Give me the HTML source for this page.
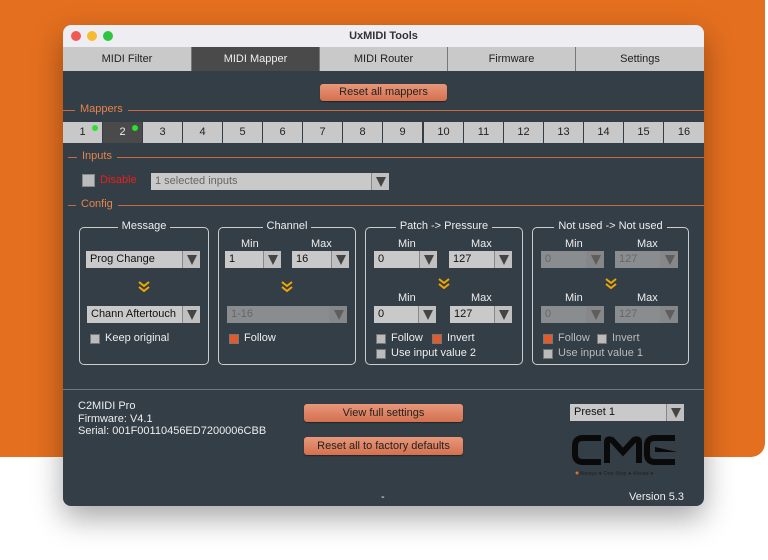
<!DOCTYPE html>
<html><head><meta charset="utf-8"><style>
*{margin:0;padding:0;box-sizing:border-box}
body{width:768px;height:560px;background:#fff;position:relative;overflow:hidden;font-family:"Liberation Sans",sans-serif;font-size:11px;color:#111}
.a{position:absolute}
#org{left:-20px;top:-20px;width:785px;height:477px;background:#e46f1f;border-radius:14px}
#win{left:63px;top:25px;width:641px;height:481px;background:#343e46;border-radius:8px;overflow:hidden;box-shadow:0 12px 30px rgba(0,0,0,.35)}
#tb{left:0;top:0;width:641px;height:22px;background:#eeeef2;text-align:center;font-weight:bold;font-size:11px;line-height:22px;color:#333}
.dot{top:6px;width:10px;height:10px;border-radius:50%}
.tab{top:22px;height:24px;background:#c9c9c9;border-right:1px solid #777;text-align:center;line-height:24px;font-size:11px;color:#222}
.btn{background:linear-gradient(#e8977a,#d4704f);border-radius:3px;text-align:center;color:#222;font-size:11px;box-shadow:0 1px 1px rgba(0,0,0,.4)}
.sec{color:#e8834d;font-size:11px;background:#343e46;padding:0 5px}
.line{height:1px;background:#c86a3c}
.mb{top:97px;height:21px;width:39px;background:#c8c8c8;text-align:center;line-height:21px;font-size:11px;color:#222}
.sel{background:#c9c9c9;height:17px;font-size:11px;line-height:17px;padding-left:4px;color:#111}
.sel:after{content:"";position:absolute;right:0;top:0;width:17px;height:17px;border-left:1px solid #888;background:#c0c0c0}
.sel i{position:absolute;right:3px;top:4px;width:0;height:0;border-left:5px solid transparent;border-right:5px solid transparent;border-top:10px solid #444;z-index:2}
.dis{background:#8a8d90;color:#666}
.dis:after{background:#858789}
.dis i{border-top-color:#5e5e5e}
.box{border:1.5px solid #ccc;border-radius:5px}
.bt{top:-8px;left:0;right:0;text-align:center;color:#eee;font-size:11px}
.bt span{background:#343e46;padding:0 4px}
.lb{color:#eee;font-size:11px}
.cb{width:10px;height:10px;background:#bbb;border:1px solid #777}
.cbo{background:#e35a2d}
.chev{left:50%;margin-left:-6px;top:53px}
</style></head><body>
<div id="org" class="a"></div>
<div id="win" class="a">
<div id="tb" class="a">UxMIDI Tools</div>
<div class="a dot" style="left:8px;background:#f05a55"></div>
<div class="a dot" style="left:24px;background:#f6bc2f"></div>
<div class="a dot" style="left:40px;background:#2ec641"></div>
<div class="a tab" style="left:0;width:129px">MIDI Filter</div>
<div class="a tab" style="left:129px;width:128px;background:#4a4a4a;color:#eee">MIDI Mapper</div>
<div class="a tab" style="left:257px;width:128px">MIDI Router</div>
<div class="a tab" style="left:385px;width:128px">Firmware</div>
<div class="a tab" style="left:513px;width:128px;border-right:0">Settings</div>
<div class="a btn" style="left:257px;top:59px;width:127px;height:17px;line-height:17px">Reset all mappers</div>
<div class="a line" style="left:0;top:85px;width:641px"></div><div class="a sec" style="left:12px;top:78px">Mappers</div>
<div class="a mb" style="left:0">1</div><div class="a" style="left:29px;top:100px;width:6px;height:6px;border-radius:50%;background:#2de02d"></div>
<div class="a mb" style="left:40px;background:#4a4a4a;color:#eee">2</div><div class="a" style="left:69px;top:100px;width:6px;height:6px;border-radius:50%;background:#2de02d"></div>
<div class="a mb" style="left:80px">3</div><div class="a mb" style="left:120px">4</div><div class="a mb" style="left:160px">5</div><div class="a mb" style="left:200px">6</div><div class="a mb" style="left:240px">7</div><div class="a mb" style="left:280px">8</div><div class="a mb" style="left:320px">9</div><div class="a mb" style="left:361px">10</div><div class="a mb" style="left:401px">11</div><div class="a mb" style="left:441px">12</div><div class="a mb" style="left:481px">13</div><div class="a mb" style="left:521px">14</div><div class="a mb" style="left:561px">15</div><div class="a mb" style="left:601px;width:40px">16</div>
<div class="a line" style="left:5px;top:132px;width:636px"></div><div class="a sec" style="left:14px;top:125px">Inputs</div>
<div class="a" style="left:19px;top:149px;width:13px;height:13px;background:#bbb;border:1px solid #888"></div>
<div class="a" style="left:37px;top:149px;color:#ee1d1d;font-size:11px">Disable</div>
<div class="a sel" style="left:88px;top:148px;width:238px;color:#666">1 selected inputs<i></i></div>
<div class="a line" style="left:5px;top:180px;width:636px"></div><div class="a sec" style="left:13px;top:173px">Config</div>

<div class="a box" style="left:16px;top:202px;width:130px;height:138px">
<div class="a bt"><span>Message</span></div>
<div class="a sel" style="left:6px;top:23px;width:114px">Prog Change<i></i></div>
<svg class="a chev" width="12" height="12" viewBox="0 0 12 12"><path d="M1 1L6 5L11 1M1 6L6 10L11 6" fill="none" stroke="#f0a800" stroke-width="2"/></svg>
<div class="a sel" style="left:7px;top:78px;width:113px">Chann Aftertouch<i></i></div>
<div class="a cb" style="left:10px;top:106px"></div><div class="a lb" style="left:25px;top:104px">Keep original</div>
</div>
<div class="a box" style="left:155px;top:202px;width:138px;height:138px">
<div class="a bt"><span>Channel</span></div>
<div class="a lb" style="left:22px;top:10px">Min</div><div class="a lb" style="left:92px;top:10px">Max</div>
<div class="a sel" style="left:6px;top:23px;width:56px">1<i></i></div>
<div class="a sel" style="left:73px;top:23px;width:57px">16<i></i></div>
<svg class="a chev" width="12" height="12" viewBox="0 0 12 12"><path d="M1 1L6 5L11 1M1 6L6 10L11 6" fill="none" stroke="#f0a800" stroke-width="2"/></svg>
<div class="a sel dis" style="left:8px;top:78px;width:120px">1-16<i></i></div>
<div class="a cb cbo" style="left:10px;top:106px"></div><div class="a lb" style="left:25px;top:104px">Follow</div>
</div>
<div class="a box" style="left:302px;top:202px;width:158px;height:138px">
<div class="a bt"><span>Patch -&gt; Pressure</span></div>
<div class="a lb" style="left:32px;top:10px">Min</div><div class="a lb" style="left:105px;top:10px">Max</div>
<div class="a sel" style="left:8px;top:23px;width:63px">0<i></i></div>
<div class="a sel" style="left:83px;top:23px;width:63px">127<i></i></div>
<svg class="a chev" style="top:50px" width="12" height="12" viewBox="0 0 12 12"><path d="M1 1L6 5L11 1M1 6L6 10L11 6" fill="none" stroke="#f0a800" stroke-width="2"/></svg>
<div class="a lb" style="left:32px;top:64px">Min</div><div class="a lb" style="left:105px;top:64px">Max</div>
<div class="a sel" style="left:8px;top:78px;width:62px">0<i></i></div>
<div class="a sel" style="left:84px;top:78px;width:62px">127<i></i></div>
<div class="a cb" style="left:10px;top:106px"></div><div class="a lb" style="left:25px;top:104px">Follow</div>
<div class="a cb cbo" style="left:66px;top:106px"></div><div class="a lb" style="left:81px;top:104px">Invert</div>
<div class="a cb" style="left:10px;top:121px"></div><div class="a lb" style="left:25px;top:119px">Use input value 2</div>
</div>
<div class="a box" style="left:469px;top:202px;width:157px;height:138px">
<div class="a bt"><span>Not used -&gt; Not used</span></div>
<div class="a lb" style="left:32px;top:10px">Min</div><div class="a lb" style="left:104px;top:10px">Max</div>
<div class="a sel dis" style="left:8px;top:23px;width:63px">0<i></i></div>
<div class="a sel dis" style="left:82px;top:23px;width:63px">127<i></i></div>
<svg class="a chev" style="top:50px" width="12" height="12" viewBox="0 0 12 12"><path d="M1 1L6 5L11 1M1 6L6 10L11 6" fill="none" stroke="#f0a800" stroke-width="2"/></svg>
<div class="a lb" style="left:32px;top:64px">Min</div><div class="a lb" style="left:104px;top:64px">Max</div>
<div class="a sel dis" style="left:8px;top:78px;width:63px">0<i></i></div>
<div class="a sel dis" style="left:82px;top:78px;width:63px">127<i></i></div>
<div class="a cb cbo" style="left:10px;top:106px"></div><div class="a lb" style="left:25px;top:104px;color:#bbb">Follow</div>
<div class="a cb" style="left:64px;top:106px"></div><div class="a lb" style="left:79px;top:104px;color:#bbb">Invert</div>
<div class="a cb" style="left:10px;top:121px"></div><div class="a lb" style="left:25px;top:119px;color:#bbb">Use input value 1</div>
</div>

<div class="a" style="left:0;top:364px;width:641px;height:1px;background:#777"></div>
<div class="a" style="left:15px;top:375px;color:#eee;font-size:11px;line-height:12.5px">C2MIDI Pro<br>Firmware: V4.1<br>Serial: 001F00110456ED7200006CBB</div>
<div class="a btn" style="left:241px;top:379px;width:159px;height:18px;line-height:18px">View full settings</div>
<div class="a btn" style="left:241px;top:412px;width:159px;height:18px;line-height:18px">Reset all to factory defaults</div>
<div class="a sel" style="left:507px;top:379px;width:114px">Preset 1<i></i></div>
<svg class="a" style="left:508px;top:409px" width="112" height="44" viewBox="0 0 112 44">
<path d="M30 4H12Q4 4 4 12V20Q4 28 12 28H30" fill="none" stroke="#0a0a0a" stroke-width="6"/>
<path d="M36 29V8Q36 4 41 6L52 18L63 6Q68 4 68 8V29" fill="none" stroke="#0a0a0a" stroke-width="6"/>
<path d="M104 4H84Q76 4 76 12V20Q76 28 84 28H104" fill="none" stroke="#0a0a0a" stroke-width="6"/>
<path d="M84 13L106 18L84 18Z" fill="#0a0a0a"/>
<text x="4" y="41" font-size="5.5" fill="#222" font-family="Liberation Sans">● Always ● One Step ● Ahead ●</text>
<circle cx="6" cy="39" r="1.5" fill="#e46f1f"/>
</svg>
<div class="a" style="left:318px;top:466px;color:#eee">-</div>
<div class="a" style="left:566px;top:466px;color:#eee;font-size:11px">Version 5.3</div>
</div>
</body></html>
